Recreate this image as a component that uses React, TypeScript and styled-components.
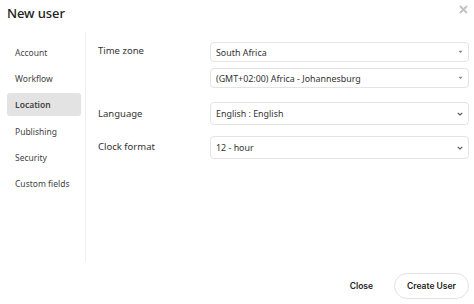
import React from 'react'
import styled, { createGlobalStyle } from 'styled-components'

const GlobalStyle = createGlobalStyle`
    html, body {
        margin: 0;
        padding: 0;
        background: #fff;
    }
    body {
        font-family: "Noto Sans", "Liberation Sans", sans-serif;
        color: #333;
    }
`

const navItems = ['Account', 'Workflow', 'Location', 'Publishing', 'Security', 'Custom fields']

const Dialog = styled.div`
    width: 474px;
    height: 304px;
    display: flex;
    flex-direction: column;
    box-sizing: border-box;
`

const Header = styled.div`
    height: 32px;
    display: flex;
    align-items: flex-start;
    justify-content: space-between;
    padding: 4px 6px 0 7px;
    box-sizing: border-box;
`

const Title = styled.h1`
    margin: 0;
    font-size: 13px;
    font-weight: 500;
    color: #222;
    letter-spacing: -0.1px;
`

const CloseIcon = styled.svg`
    width: 9px;
    height: 9px;
    margin-top: 1px;
`

const Body = styled.div`
    flex: 1;
    display: flex;
`

const Sidebar = styled.nav`
    width: 86px;
    border-right: 1px solid #efefef;
    padding: 9px 4px 0 7px;
    box-sizing: border-box;
    display: flex;
    flex-direction: column;
    gap: 3.2px;
`

const NavItem = styled.div<{ active?: boolean }>`
    height: 23px;
    display: flex;
    align-items: center;
    padding-left: 8px;
    border-radius: 3px;
    font-size: 8.5px;
    color: #444;
    font-weight: ${p => (p.active ? 600 : 400)};
    background: ${p => (p.active ? '#e3e3e3' : 'transparent')};
`

const Content = styled.div`
    flex: 1;
    padding: 10px 5px 0 12px;
    display: grid;
    grid-template-columns: 112px 1fr;
    grid-auto-rows: min-content;
    row-gap: 11px;
`

const Label = styled.div<{ h: number }>`
    height: ${p => p.h}px;
    display: flex;
    align-items: center;
    font-size: 9.5px;
    color: #333;
`

const Stack = styled.div`
    display: flex;
    flex-direction: column;
    gap: 6px;
    margin-bottom: 3px;
`

const Select = styled.div<{ tall?: boolean }>`
    height: ${p => (p.tall ? 23 : 20)}px;
    border: 1px solid #e4e4e4;
    border-radius: 4px;
    box-sizing: border-box;
    display: flex;
    align-items: center;
    justify-content: space-between;
    padding: 0 5px 0 5px;
    font-size: 8.9px;
    color: #333;
`

const Footer = styled.div`
    height: 42px;
    display: flex;
    align-items: center;
    justify-content: flex-end;
    gap: 21px;
    padding: 6px 5px 0 0;
    box-sizing: border-box;
`

const TextButton = styled.button`
    border: none;
    background: none;
    padding: 0;
    font-family: Inter, "Noto Sans", sans-serif;
    font-size: 8.5px;
    font-weight: 600;
    color: #222;
`

const PillButton = styled.button`
    height: 26px;
    width: 75px;
    border: 1px solid #e2e2e2;
    border-radius: 13px;
    background: #fff;
    font-family: Inter, "Noto Sans", sans-serif;
    font-size: 8.5px;
    font-weight: 600;
    color: #222;
    padding: 0;
`

const Caret = () => (
    <svg width="5" height="4" viewBox="0 0 5 4">
        <path d="M0.5 0.8 L4.5 0.8 L2.5 3.3 Z" fill="#888" />
    </svg>
)

const Chevron = () => (
    <svg width="6" height="4" viewBox="0 0 6 4">
        <path d="M0.7 0.8 L3 3 L5.3 0.8" fill="none" stroke="#555" strokeWidth="1.1" />
    </svg>
)

export default function App() {
    return (
        <>
            <GlobalStyle />
            <Dialog>
                <Header>
                    <Title>New user</Title>
                    <CloseIcon viewBox="0 0 9 9">
                        <path d="M1 1 L8 8 M8 1 L1 8" stroke="#c4c4c4" strokeWidth="2" />
                    </CloseIcon>
                </Header>
                <Body>
                    <Sidebar>
                        {navItems.map(item => (
                            <NavItem key={item} active={item === 'Location'}>{item}</NavItem>
                        ))}
                    </Sidebar>
                    <Content>
                        <Label h={16}>Time zone</Label>
                        <Stack>
                            <Select>South Africa<Caret /></Select>
                            <Select>(GMT+02:00) Africa - Johannesburg<Caret /></Select>
                        </Stack>
                        <Label h={23}>Language</Label>
                        <Select tall>English : English<Chevron /></Select>
                        <Label h={21}>Clock format</Label>
                        <Select tall>12 - hour<Chevron /></Select>
                    </Content>
                </Body>
                <Footer>
                    <TextButton>Close</TextButton>
                    <PillButton>Create User</PillButton>
                </Footer>
            </Dialog>
        </>
    )
}
